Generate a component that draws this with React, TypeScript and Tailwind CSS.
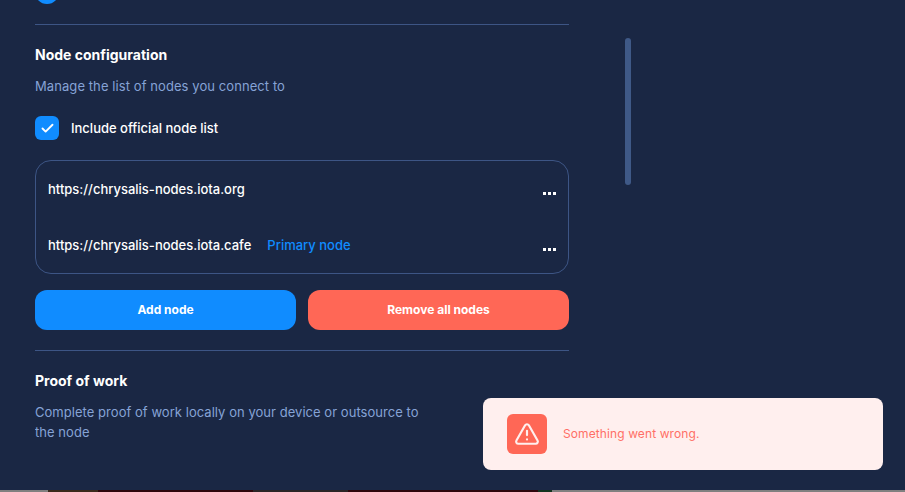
import { Check, TriangleAlert } from "lucide-react";

const nodes = [
  { url: "https://chrysalis-nodes.iota.org", primary: false },
  { url: "https://chrysalis-nodes.iota.cafe", primary: true },
];

function Dots() {
  return (
    <div className="flex gap-[2px]">
      <span className="w-[3px] h-[3px] bg-white" />
      <span className="w-[3px] h-[3px] bg-white" />
      <span className="w-[3px] h-[3px] bg-white" />
    </div>
  );
}

export default function App() {
  return (
    <div className="relative h-[492px] w-[905px] overflow-hidden bg-[#1a2744] font-['Inter',sans-serif] text-white">
      {/* settings column */}
      <div className="w-[534px] ml-[35px] h-[490px] overflow-hidden">
        <div className="w-[24px] h-[24px] -mt-[20px] ml-[0px] rounded-full bg-[#108cff]" />
        <div className="mt-[20px] h-px bg-[#3d5585]" />

        <h2 className="mt-[20px] text-[14px] leading-[20px] font-bold">Node configuration</h2>
        <p className="mt-[11px] text-[13px] leading-[20px] tracking-[0.08px] text-[#86a3d6]">Manage the list of nodes you connect to</p>

        <div className="mt-[20px] flex items-center gap-[12px]">
          <div className="flex h-[24px] w-[24px] items-center justify-center rounded-[6px] bg-[#108cff]">
            <Check size={15} strokeWidth={3} />
          </div>
          <span className="text-[13px] leading-[20px] font-medium">Include official node list</span>
        </div>

        <div className="mt-[20px] h-[114px] rounded-[16px] border border-[#3d5585] px-[12px] pt-[18px]">
          {nodes.map((node) => (
            <div key={node.url} className="flex h-[56px] items-start justify-between">
              <div className="flex gap-[16px] text-[13px] leading-[20px] font-medium">
                <span>{node.url}</span>
                {node.primary && <span className="text-[#108cff]">Primary node</span>}
              </div>
              <div className="mt-[13px]">
                <Dots />
              </div>
            </div>
          ))}
        </div>

        <div className="mt-[16px] flex gap-[12px]">
          <button type="button" className="h-[40px] flex-1 rounded-[12px] bg-[#108cff] text-[12px] font-bold">
            Add node
          </button>
          <button type="button" className="h-[40px] flex-1 rounded-[12px] bg-[#ff6756] text-[12px] font-bold">
            Remove all nodes
          </button>
        </div>

        <div className="mt-[20px] h-px bg-[#3d5585]" />

        <h2 className="mt-[20px] text-[14px] leading-[20px] font-bold">Proof of work</h2>
        <p className="mt-[11px] w-[400px] text-[13px] leading-[20px] tracking-[0.04px] text-[#86a3d6]">
          Complete proof of work locally on your device or outsource to the node
        </p>
      </div>

      {/* scrollbar */}
      <div className="absolute left-[625px] top-[38px] h-[147px] w-[6px] rounded-full bg-[#3f5987]" />

      {/* toast */}
      <div className="absolute left-[483px] top-[398px] flex h-[72px] w-[400px] items-center gap-[16px] rounded-[8px] bg-[#ffefee] px-[24px]">
        <div className="flex h-[40px] w-[40px] items-center justify-center rounded-[6px] bg-[#ff6756]">
          <TriangleAlert size={26} strokeWidth={2} className="text-[#ffefee]" />
        </div>
        <span className="text-[12px] tracking-[0.1px] text-[#ff6f66]">Something went wrong.</span>
      </div>

      {/* window strip behind the app */}
      <div className="absolute bottom-0 left-0 flex h-[2px] w-full bg-[#808080]">
        <div className="ml-[48px] flex w-[504px]">
          <div className="w-[50px] bg-[#3a2a1c]" />
          <div className="w-[155px] bg-[#2e060c]" />
          <div className="w-[95px] bg-[#2a2526]" />
          <div className="w-[190px] bg-[#2e060c]" />
          <div className="w-[14px] bg-[#12331f]" />
        </div>
      </div>
    </div>
  );
}
